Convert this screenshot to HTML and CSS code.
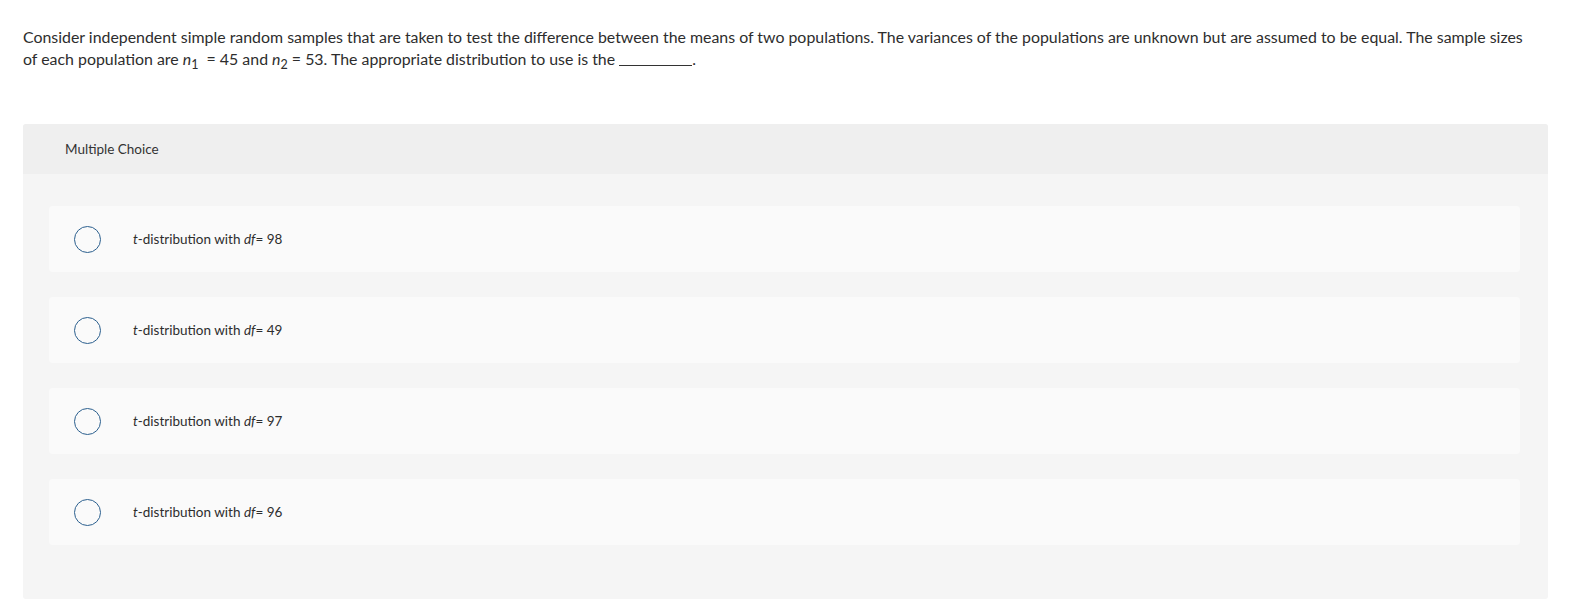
FILE: index.html
```html
<!DOCTYPE html>
<html lang="en">
<head>
<meta charset="utf-8">
<title>Question</title>
<link rel="stylesheet" href="styles.css">
</head>
<body>
<div class="page">
  <p class="prompt">Consider independent simple random samples that are taken to test the difference between the means of two populations. The variances of the populations are unknown but are assumed to be equal. The sample sizes of each population are <i>n</i><span class="sub">1</span>&nbsp; = 45 and <i>n</i><span class="sub">2</span> = 53. The appropriate distribution to use is the <span class="blank"></span>.</p>
  <section class="panel">
    <header class="panel-head">Multiple Choice</header>
    <div class="options">
      <label class="option"><span class="radio"></span><span class="opt-text"><i>t</i>-distribution with <i>df</i>= 98</span></label>
      <label class="option"><span class="radio"></span><span class="opt-text"><i>t</i>-distribution with <i>df</i>= 49</span></label>
      <label class="option"><span class="radio"></span><span class="opt-text"><i>t</i>-distribution with <i>df</i>= 97</span></label>
      <label class="option"><span class="radio"></span><span class="opt-text"><i>t</i>-distribution with <i>df</i>= 96</span></label>
    </div>
  </section>
</div>
</body>
</html>
```
FILE: styles.css
```css
html, body {
  margin: 0;
  padding: 0;
  background: #ffffff;
}
body {
  font-family: "Lato", "Liberation Sans", sans-serif;
  color: #333333;
}
.page {
  padding: 26px 37px 0 23px;
}
.prompt {
  margin: 0;
  padding-right: 12px;
  font-size: 15.9px;
  line-height: 22px;
  color: #2d2d2d;
}
.prompt .sub {
  font-size: 12.5px;
  line-height: 0;
  position: relative;
  top: 4px;
}
.blank {
  display: inline-block;
  width: 73px;
  border-bottom: 1px solid #333;
  vertical-align: -1px;
}
.panel {
  margin-top: 54px;
  background: #f5f5f5;
  border-radius: 3px;
  height: 475px;
  box-sizing: border-box;
  overflow: hidden;
}
.panel-head {
  height: 50px;
  background: #efefef;
  display: flex;
  align-items: center;
  padding-left: 42px;
  font-size: 13.5px;
  color: #333;
}
.options {
  display: flex;
  flex-direction: column;
  gap: 25px;
  padding: 32px 28px 0 26px;
}
.option {
  height: 66px;
  background: #fafafa;
  border-radius: 4px;
  display: flex;
  align-items: center;
}
.radio {
  width: 25px;
  height: 25px;
  border: 1.5px solid #2b5f8e;
  border-radius: 50%;
  margin-left: 25px;
  flex: none;
}
.opt-text {
  margin-left: 32px;
  font-size: 13.5px;
  color: #2d2d2d;
}
```
